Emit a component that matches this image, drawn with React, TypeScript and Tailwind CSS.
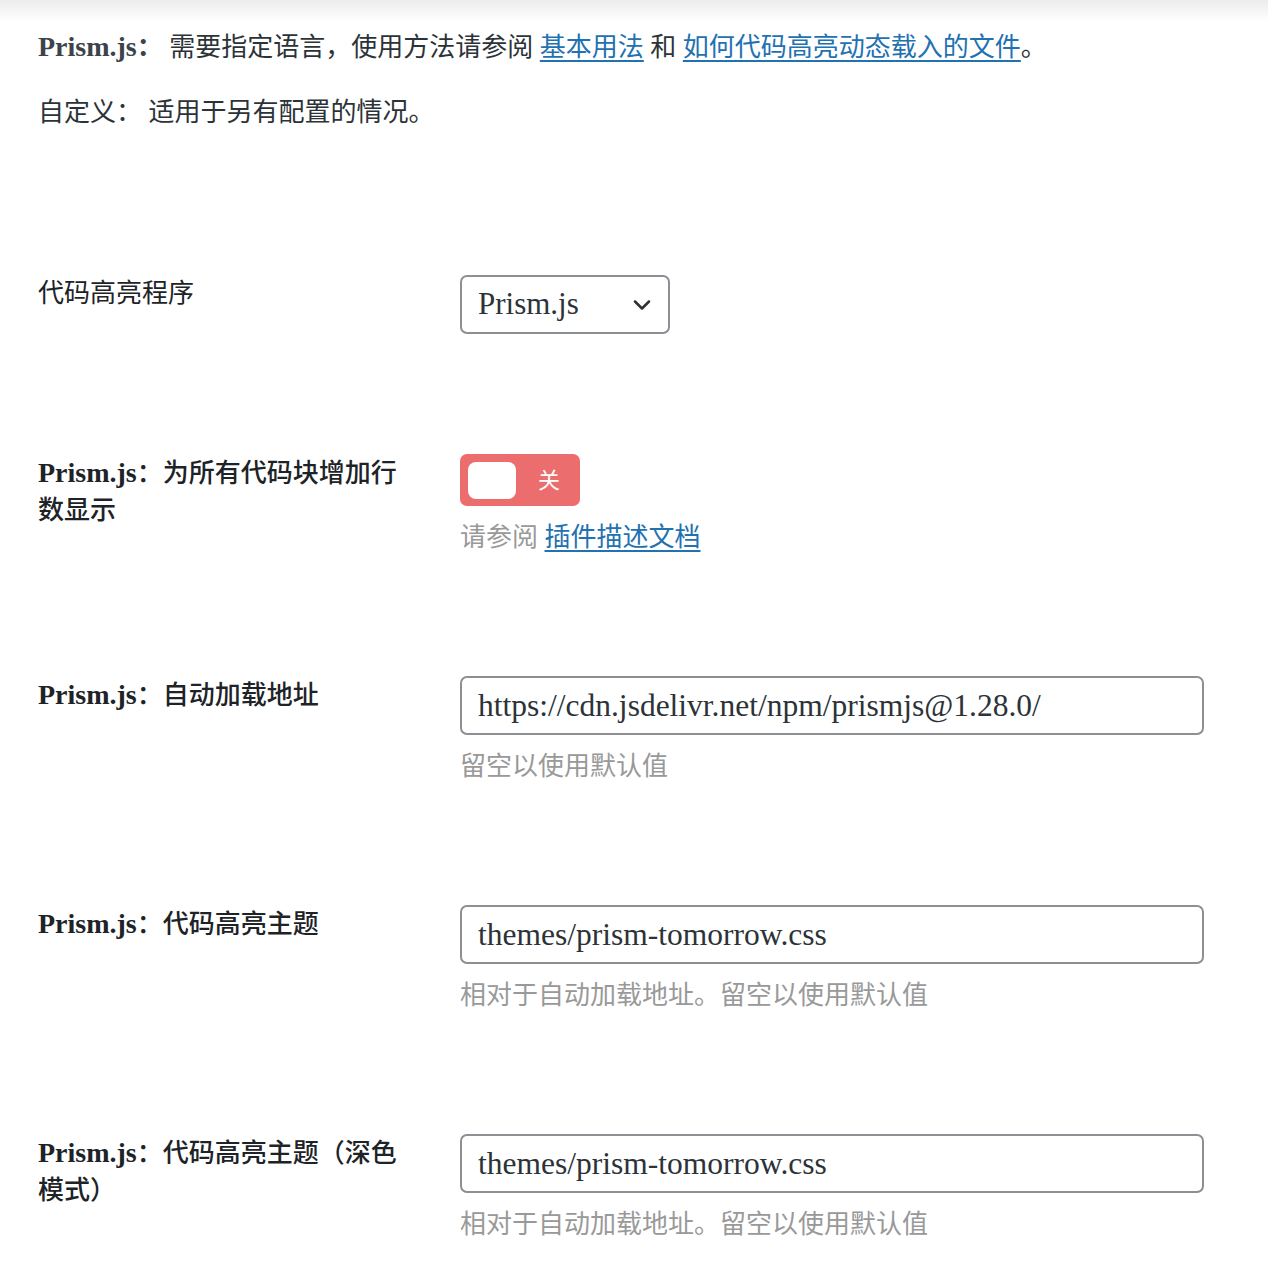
import { ChevronDown } from 'lucide-react'

const FONT = '"Liberation Serif", "Noto Sans CJK SC", serif'

function Label({ children }: { children: React.ReactNode }) {
  return (
    <div className="w-[422px] shrink-0 pr-[40px] text-[26px] leading-[37px] text-[#1d2327] font-medium">
      {children}
    </div>
  )
}

function Help({ children }: { children: React.ReactNode }) {
  return <p className="mt-[13px] text-[26px] leading-[37px] text-[#999]">{children}</p>
}

function TextInput({ value }: { value: string }) {
  return (
    <div className="w-[744px] h-[59px] rounded-[7px] border-2 border-[#8c8f94] px-[16px] flex items-center text-[31.5px] text-[#2c3338]">
      {value}
    </div>
  )
}

function P({ children }: { children: React.ReactNode }) {
  return <span className="text-[28px] leading-[37px] font-bold">{children}</span>
}

export default function App() {
  return (
    <div className="min-h-[1284px] bg-white text-[#1d2327]" style={{ fontFamily: FONT }}>
      <div className="h-[22px] bg-gradient-to-b from-[#ececec] to-white" />

      <div className="px-[38px]">
        {/* Intro */}
        <p className="text-[26px] leading-[37px] mt-[6px] text-[#2c3338]">
          <span className="font-bold text-[#3c434a]"><span className="text-[28px] leading-[37px]">Prism.js</span>：</span> 需要指定语言，使用方法请参阅{' '}
          <a className="text-[#2271b1] underline underline-offset-4">基本用法</a> 和{' '}
          <a className="text-[#2271b1] underline underline-offset-4">如何代码高亮动态载入的文件</a>。
        </p>
        <p className="text-[26px] leading-[37px] mt-[28px] text-[#2c3338]">
          自定义： 适用于另有配置的情况。
        </p>

        {/* Settings rows */}
        <div className="mt-[144px] flex flex-col gap-[120px]">
          <div className="flex items-start">
            <div className="w-[422px] shrink-0 text-[26px] leading-[37px] text-[#1d2327]">代码高亮程序</div>
            <div className="w-[210px] h-[59px] rounded-[7px] border-2 border-[#8c8f94] pl-[16px] pr-[12px] flex items-center justify-between text-[31px] text-[#2c3338]">
              <span>Prism.js</span>
              <ChevronDown size={28} strokeWidth={2.2} className="text-[#2c3338]" />
            </div>
          </div>

          <div className="flex items-start">
            <Label>
              <P>Prism.js</P>：为所有代码块增加行数显示
            </Label>
            <div>
              <div className="w-[120px] h-[52px] rounded-[7px] bg-[#ec6d6d] flex items-center pl-[8px]">
                <div className="w-[48px] h-[37px] rounded-[8px] bg-white" />
                <span className="ml-[22px] text-[22px] text-white">关</span>
              </div>
              <Help>
                请参阅 <a className="text-[#2271b1] underline underline-offset-4">插件描述文档</a>
              </Help>
            </div>
          </div>

          <div className="flex items-start">
            <Label>
              <P>Prism.js</P>：自动加载地址
            </Label>
            <div>
              <TextInput value="https://cdn.jsdelivr.net/npm/prismjs@1.28.0/" />
              <Help>留空以使用默认值</Help>
            </div>
          </div>

          <div className="flex items-start">
            <Label>
              <P>Prism.js</P>：代码高亮主题
            </Label>
            <div>
              <TextInput value="themes/prism-tomorrow.css" />
              <Help>相对于自动加载地址。留空以使用默认值</Help>
            </div>
          </div>

          <div className="flex items-start">
            <Label>
              <P>Prism.js</P>：代码高亮主题（深色模式）
            </Label>
            <div>
              <TextInput value="themes/prism-tomorrow.css" />
              <Help>相对于自动加载地址。留空以使用默认值</Help>
            </div>
          </div>
        </div>
      </div>
    </div>
  )
}
